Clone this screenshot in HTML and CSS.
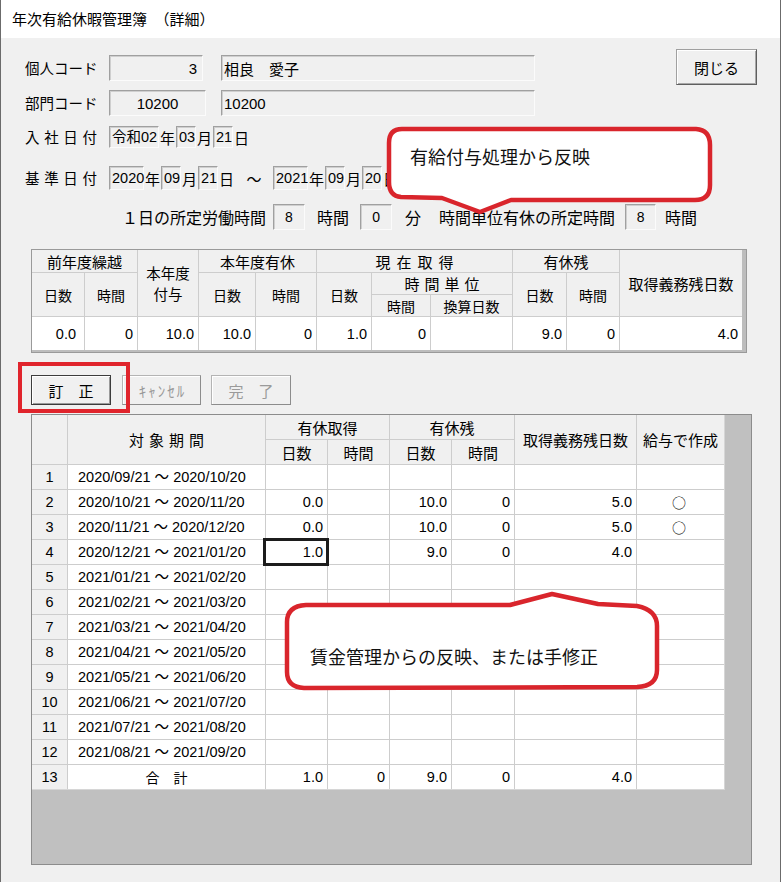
FILE: index.html
```html
<!DOCTYPE html>
<html lang="ja">
<head>
<meta charset="utf-8">
<title>年次有給休暇管理簿（詳細）</title>
<link rel="stylesheet" href="styles.css">
</head>
<body>
<div class="window">
  <div class="titlebar">年次有給休暇管理簿　（詳細）</div>

  <div class="top">
    <div class="fields">
      <div class="row r1">
        <span class="label">個人コード</span>
        <span class="box num right w94">3</span>
        <span class="box jp wname ml18">相良　愛子</span>
      </div>
      <div class="row r2">
        <span class="label">部門コード</span>
        <span class="box num center w97">10200</span>
        <span class="box num wname ml15">10200</span>
      </div>
      <div class="row r3">
        <span class="label just">入社日付</span>
        <span class="box dnum dg">令和02</span><span class="unit">年</span>
        <span class="box dnum dm">03</span><span class="unit">月</span>
        <span class="box dnum dm">21</span><span class="unit">日</span>
      </div>
      <div class="row r4">
        <span class="label just">基準日付</span>
        <span class="box dnum dy">2020</span><span class="unit">年</span>
        <span class="box dnum dm">09</span><span class="unit">月</span>
        <span class="box dnum dm">21</span><span class="unit">日</span>
        <span class="tilde">～</span>
        <span class="box dnum dy">2021</span><span class="unit">年</span>
        <span class="box dnum dm">09</span><span class="unit">月</span>
        <span class="box dnum dm">20</span><span class="unit">日</span>
      </div>
    </div>
    <button class="btn close">閉じる</button>
    <div class="row r5">
      <span class="t16">１日の所定労働時間</span>
      <span class="box num center w32 ml7">8</span>
      <span class="t16 ml12">時間</span>
      <span class="box num center w32 ml11">0</span>
      <span class="t16 ml13">分</span>
      <span class="t16 ml18">時間単位有休の所定時間</span>
      <span class="box num center w31 ml10">8</span>
      <span class="t16 ml9">時間</span>
    </div>
  </div>

  <div class="summary">
    <div class="sgrid">
      <div class="h big cs2">前年度繰越</div>
      <div class="h big rs3 two"><span class="ln">本年度</span><span class="ln">付与</span></div>
      <div class="h big cs2">本年度有休</div>
      <div class="h big cs3 ls6">現在取得</div>
      <div class="h big cs2">有休残</div>
      <div class="h big rs3">取得義務残日数</div>

      <div class="h rs2">日数</div>
      <div class="h rs2">時間</div>
      <div class="h rs2">日数</div>
      <div class="h rs2">時間</div>
      <div class="h rs2">日数</div>
      <div class="h big cs2 ls5">時間単位</div>
      <div class="h rs2">日数</div>
      <div class="h rs2">時間</div>

      <div class="h">時間</div>
      <div class="h">換算日数</div>

      <div class="d pr8">0.0</div>
      <div class="d">0</div>
      <div class="d">10.0</div>
      <div class="d">10.0</div>
      <div class="d">0</div>
      <div class="d">1.0</div>
      <div class="d">0</div>
      <div class="d"></div>
      <div class="d">9.0</div>
      <div class="d">0</div>
      <div class="d">4.0</div>
    </div>
  </div>

  <div class="actions">
    <button class="btn act primary">訂　正</button>
    <button class="btn act disabled kana">ｷｬﾝｾﾙ</button>
    <button class="btn act disabled">完　了</button>
  </div>

  <div class="detail">
    <div class="dgrid">
      <div class="h rs2"></div>
      <div class="h rs2 ls5">対象期間</div>
      <div class="h cs2">有休取得</div>
      <div class="h cs2">有休残</div>
      <div class="h rs2">取得義務残日数</div>
      <div class="h rs2">給与で作成</div>
      <div class="h">日数</div>
      <div class="h">時間</div>
      <div class="h">日数</div>
      <div class="h">時間</div>

      <div class="n">1</div><div class="p">2020/09/21 ～ 2020/10/20</div><div class="v"></div><div class="v"></div><div class="v"></div><div class="v"></div><div class="v"></div><div class="c"></div>
      <div class="n">2</div><div class="p">2020/10/21 ～ 2020/11/20</div><div class="v">0.0</div><div class="v"></div><div class="v">10.0</div><div class="v">0</div><div class="v">5.0</div><div class="c">○</div>
      <div class="n">3</div><div class="p">2020/11/21 ～ 2020/12/20</div><div class="v">0.0</div><div class="v"></div><div class="v">10.0</div><div class="v">0</div><div class="v">5.0</div><div class="c">○</div>
      <div class="n">4</div><div class="p">2020/12/21 ～ 2021/01/20</div><div class="v sel">1.0</div><div class="v"></div><div class="v">9.0</div><div class="v">0</div><div class="v">4.0</div><div class="c"></div>
      <div class="n">5</div><div class="p">2021/01/21 ～ 2021/02/20</div><div class="v"></div><div class="v"></div><div class="v"></div><div class="v"></div><div class="v"></div><div class="c"></div>
      <div class="n">6</div><div class="p">2021/02/21 ～ 2021/03/20</div><div class="v"></div><div class="v"></div><div class="v"></div><div class="v"></div><div class="v"></div><div class="c"></div>
      <div class="n">7</div><div class="p">2021/03/21 ～ 2021/04/20</div><div class="v"></div><div class="v"></div><div class="v"></div><div class="v"></div><div class="v"></div><div class="c"></div>
      <div class="n">8</div><div class="p">2021/04/21 ～ 2021/05/20</div><div class="v"></div><div class="v"></div><div class="v"></div><div class="v"></div><div class="v"></div><div class="c"></div>
      <div class="n">9</div><div class="p">2021/05/21 ～ 2021/06/20</div><div class="v"></div><div class="v"></div><div class="v"></div><div class="v"></div><div class="v"></div><div class="c"></div>
      <div class="n">10</div><div class="p">2021/06/21 ～ 2021/07/20</div><div class="v"></div><div class="v"></div><div class="v"></div><div class="v"></div><div class="v"></div><div class="c"></div>
      <div class="n">11</div><div class="p">2021/07/21 ～ 2021/08/20</div><div class="v"></div><div class="v"></div><div class="v"></div><div class="v"></div><div class="v"></div><div class="c"></div>
      <div class="n">12</div><div class="p">2021/08/21 ～ 2021/09/20</div><div class="v"></div><div class="v"></div><div class="v"></div><div class="v"></div><div class="v"></div><div class="c"></div>
      <div class="n">13</div><div class="p total">合　計</div><div class="v">1.0</div><div class="v">0</div><div class="v">9.0</div><div class="v">0</div><div class="v">4.0</div><div class="c"></div>
    </div>
  </div>

  <div class="mark"></div>

  <div class="callout c1">
    <svg class="shape" width="330" height="95" viewBox="0 0 330 95">
      <path d="M18 5 L312 5 Q326 6 326 21 L326 61 Q326 76 311 76 L127 76 L96 88 L58 74 L17 73 Q5 72 5 58 L5 19 Q5 5 18 5 Z"/>
    </svg>
    <span class="ctext">有給付与処理から反映</span>
  </div>

  <div class="callout c2">
    <svg class="shape" width="380" height="105" viewBox="0 0 380 105">
      <path d="M24 17 L228 17 L270 6 L316 16 L355 18 Q375 22 375 38 L375 82 Q375 98 355 99 L22 100 Q5 99 5 84 L5 34 Q5 18 24 17 Z"/>
    </svg>
    <span class="ctext">賃金管理からの反映、または手修正</span>
  </div>
</div>
</body>
</html>
```
FILE: styles.css
```css
* { box-sizing: border-box; }
html, body { margin: 0; padding: 0; }
body {
  background: #f0f0f0;
  font-family: "Noto Sans CJK JP", sans-serif;
  color: #000;
}

.window {
  position: relative;
  width: 781px;
  height: 882px;
  background: #f0f0f0;
  border-left: 1px solid #6b6b6b;
  border-right: 1px solid #6b6b6b;
  overflow: hidden;
}

.titlebar {
  height: 38px;
  background: #fff;
  padding-left: 11px;
  font-size: 15px;
  line-height: 38px;
}

/* ---------- top form ---------- */
.top {
  display: grid;
  grid-template-columns: 1fr auto;
  padding: 11px 23px 0 24px;
}
.fields { margin-top: 6px; display: flex; flex-direction: column; }
.row { display: flex; align-items: center; }
.r1 { height: 26px; }
.r2 { height: 26px; margin-top: 9px; }
.r3 { height: 22px; margin-top: 10px; }
.r4 { height: 24px; margin-top: 18px; }
.r5 {
  grid-column: 1 / -1;
  height: 26px;
  margin-top: 14px;
  padding-left: 97px;
}

.label {
  width: 72px;
  margin-right: 12px;
  font-size: 14.5px;
  white-space: nowrap;
  line-height: 1;
}
.label.just { text-align: justify; text-align-last: justify; }

.box {
  display: flex;
  align-items: center;
  height: 100%;
  background: #f0f0f0;
  border-style: solid;
  border-width: 1px;
  border-color: #a0a0a0 #fbfbfb #fbfbfb #a0a0a0;
  box-shadow: inset 1px 1px 0 #cfcfcf;
  padding: 0 2px;
  white-space: nowrap;
  line-height: 1;
}
.box.right { justify-content: flex-end; padding-right: 5px; }
.box.center { justify-content: center; }
.num { font-family: "Liberation Sans", "Noto Sans CJK JP", sans-serif; font-size: 15px; }
.jp { font-size: 15px; }
.dnum {
  font-family: "Liberation Sans", "Noto Sans CJK JP", sans-serif;
  font-size: 14.5px;
}
.w94 { width: 94px; }
.w97 { width: 97px; }
.wname { width: 314px; }
.w32 { width: 32px; }
.w31 { width: 31px; }
.dg { width: 50px; }
.dy { width: 35px; }
.dm { width: 20px; }
.r5 .box { font-size: 14px; }

.unit {
  width: 17px;
  text-align: center;
  font-size: 15px;
  line-height: 1;
}
.tilde {
  width: 38px;
  text-align: center;
  font-size: 15px;
  line-height: 1;
}
.t16 { font-size: 16px; line-height: 1; white-space: nowrap; }

.ml7 { margin-left: 7px; }
.ml9 { margin-left: 9px; }
.ml10 { margin-left: 10px; }
.ml11 { margin-left: 11px; }
.ml12 { margin-left: 12px; }
.ml13 { margin-left: 13px; }
.ml15 { margin-left: 15px; }
.ml18 { margin-left: 18px; }

/* ---------- buttons ---------- */
.btn {
  font-family: "Noto Sans CJK JP", sans-serif;
  font-size: 15px;
  color: #000;
  background: #f0f0f0;
  border: 1px solid;
  border-color: #a0a0a0 #5f5f5f #5f5f5f #a0a0a0;
  box-shadow: inset 1px 1px 0 #fff, inset -1px -1px 0 #a8a8a8;
  padding: 0;
  line-height: 1;
  cursor: default;
}
.close {
  grid-column: 2;
  grid-row: 1;
  align-self: start;
  width: 81px;
  height: 36px;
}
.actions {
  display: flex;
  margin-top: 22px;
  padding-left: 30px;
  gap: 10px;
}
.act { width: 80px; height: 30px; }
.act.primary {
  border-color: #3c3c3c;
  box-shadow: inset 1px 1px 0 #fff, inset -1px -1px 0 #9a9a9a;
}
.act.disabled {
  color: #9a9a9a;
  border-color: #b4b4b4 #8c8c8c #8c8c8c #b4b4b4;
  box-shadow: inset 1px 1px 0 #fff;
}
.act.kana { width: 79px; margin-left: 1px; letter-spacing: 2px; padding-left: 2px; }

/* ---------- summary grid ---------- */
.summary {
  margin: 19px 0 0 30px;
  width: 716px;
  height: 104px;
  border: 1px solid #9a9a9a;
  background: #bdbdbd;
}
.sgrid {
  display: grid;
  grid-template-columns: 52px 52px 60px 56px 60px 54px 58px 81px 53px 52px 122px;
  grid-template-rows: 22px 21px 21px 33px;
  gap: 1px;
  background: #cdcdcd;
  width: 710px;
}
.sgrid .h, .dgrid .h {
  background: #f0f0f0;
  display: flex;
  align-items: center;
  justify-content: center;
  text-align: center;
  font-size: 14px;
  line-height: 1;
  white-space: nowrap;
}
.sgrid .h.big { font-size: 15px; }
.sgrid .h.two { flex-direction: column; font-size: 14.5px; }
.sgrid .h.two .ln { display: block; height: 21px; line-height: 21px; }
.sgrid .d {
  background: #fff;
  display: flex;
  align-items: center;
  justify-content: flex-end;
  padding-right: 4px;
  font-family: "Liberation Sans", sans-serif;
  font-size: 14.5px;
}
.sgrid .d.pr8 { padding-right: 8px; }

.cs2 { grid-column: span 2; }
.cs3 { grid-column: span 3; }
.rs2 { grid-row: span 2; }
.rs3 { grid-row: span 3; }
.ls5 { letter-spacing: 5px; padding-left: 5px; }
.ls6 { letter-spacing: 6px; padding-left: 6px; }

/* ---------- detail grid ---------- */
.detail {
  margin: 9px 0 0 30px;
  width: 721px;
  height: 451px;
  border: 1px solid #8c8c8c;
  background: #c0c0c0;
}
.dgrid {
  display: grid;
  grid-template-columns: 35px 197px 61px 61px 61px 62px 121px 87px;
  grid-auto-rows: 24px;
  gap: 1px;
  background: #cdcdcd;
  width: 693px;
  border-right: 1px solid #d6d6d6;
  border-bottom: 1px solid #d6d6d6;
}
.dgrid .h { font-size: 15px; }
.dgrid .n, .dgrid .p, .dgrid .v, .dgrid .c {
  display: flex;
  align-items: center;
  font-family: "Liberation Sans", "Noto Sans CJK JP", sans-serif;
  font-size: 14.5px;
  line-height: 1;
  white-space: nowrap;
}
.dgrid .n { background: #f0f0f0; justify-content: center; }
.dgrid .p { background: #fff; padding-left: 10px; }
.dgrid .p.total {
  justify-content: center;
  padding-left: 0;
  font-family: "Noto Sans CJK JP", sans-serif;
  font-size: 14px;
}
.dgrid .v { background: #fff; justify-content: flex-end; padding-right: 4px; }
.dgrid .c {
  background: #fff;
  justify-content: center;
  font-family: "Noto Sans CJK JP", sans-serif;
  font-size: 14px;
  padding-right: 3px;
}
.dgrid .sel { position: relative; z-index: 1; }
.dgrid .sel::after {
  content: "";
  position: absolute;
  left: -3px;
  top: -2px;
  right: -2px;
  bottom: -2px;
  border: 3px solid #1c1c1c;
}

/* ---------- annotations ---------- */
.mark {
  position: absolute;
  left: 17px;
  top: 362px;
  width: 112px;
  height: 51px;
  border: 4px solid #e0242c;
}
.callout { position: absolute; }
.callout .shape { position: absolute; left: 0; top: 0; overflow: visible; }
.callout .shape path {
  fill: #fff;
  stroke: #d9252c;
  stroke-width: 4.5;
  stroke-linejoin: round;
}
.ctext {
  position: relative;
  display: block;
  font-size: 18px;
  line-height: 24px;
  white-space: nowrap;
  color: #111;
}
.c1 { left: 383px; top: 124px; width: 330px; height: 95px; padding: 20px 0 0 26px; }
.c2 { left: 281px; top: 588px; width: 380px; height: 105px; padding: 56px 0 0 28px; }
```
